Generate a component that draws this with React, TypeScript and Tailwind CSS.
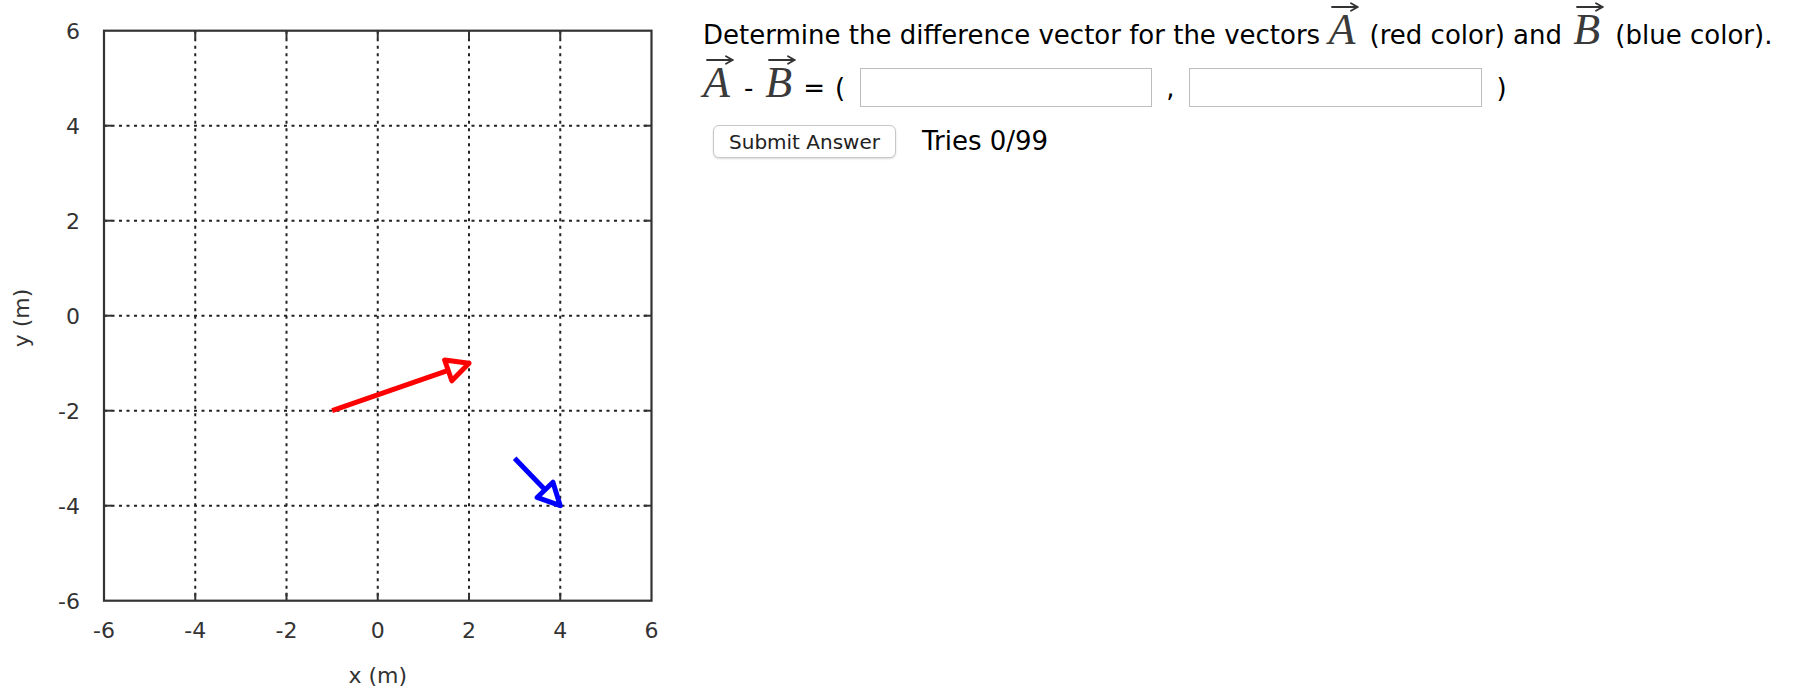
import React from "react"

// plot coordinates -> pixels
const X = (v: number) => 377.75 + v * 45.625
const Y = (v: number) => 315.7 - v * 47.5

const TICKS = [-6, -4, -2, 0, 2, 4, 6]

function VecArrow({ from, to, color }: { from: [number, number]; to: [number, number]; color: string }) {
  const x1 = X(from[0]), y1 = Y(from[1])
  const x2 = X(to[0]), y2 = Y(to[1])
  const dx = x2 - x1, dy = y2 - y1
  const len = Math.hypot(dx, dy)
  const ux = dx / len, uy = dy / len
  const L = 22, W = 11
  const bx = x2 - ux * L, by = y2 - uy * L
  const p1 = `${bx - uy * W},${by + ux * W}`
  const p2 = `${bx + uy * W},${by - ux * W}`
  return (
    <g>
      <line x1={x1} y1={y1} x2={bx} y2={by} stroke={color} strokeWidth={5} />
      <polygon points={`${x2},${y2} ${p1} ${p2}`} fill="#fff" stroke={color} strokeWidth={5} strokeLinejoin="round" />
    </g>
  )
}

function Plot() {
  const left = X(-6), right = X(6), top = Y(6), bottom = Y(-6)
  return (
    <svg width="701" height="698" viewBox="0 0 701 698" className="shrink-0" fontFamily="'DejaVu Sans', sans-serif">
      {/* grid */}
      {TICKS.slice(1, -1).map(t => (
        <g key={t}>
          <line x1={X(t)} y1={top} x2={X(t)} y2={bottom} stroke="#222" strokeWidth={2} strokeDasharray="3 4.5" />
          <line x1={left} y1={Y(t)} x2={right} y2={Y(t)} stroke="#222" strokeWidth={2} strokeDasharray="3 4.5" />
          {/* small ticks on the border */}
          <line x1={X(t)} y1={bottom} x2={X(t)} y2={bottom - 8} stroke="#333" strokeWidth={2} />
          <line x1={X(t)} y1={top} x2={X(t)} y2={top + 8} stroke="#333" strokeWidth={2} />
          <line x1={left} y1={Y(t)} x2={left + 8} y2={Y(t)} stroke="#333" strokeWidth={2} />
          <line x1={right} y1={Y(t)} x2={right - 8} y2={Y(t)} stroke="#333" strokeWidth={2} />
        </g>
      ))}
      <rect x={left} y={top} width={right - left} height={bottom - top} fill="none" stroke="#333" strokeWidth={2.2} />

      {/* tick labels */}
      {TICKS.map(t => (
        <text key={"y" + t} x={80} y={Y(t) + 8} textAnchor="end" fontSize={22} fill="#333">{t}</text>
      ))}
      {TICKS.map(t => (
        <text key={"x" + t} x={X(t)} y={638} textAnchor="middle" fontSize={22} fill="#333">{t}</text>
      ))}
      <text x={X(0)} y={683} textAnchor="middle" fontSize={22} fill="#333">x (m)</text>
      <text x={29} y={318} textAnchor="middle" fontSize={22} fill="#333" transform="rotate(-90 29 318)">y (m)</text>

      {/* vectors */}
      <VecArrow from={[-1, -2]} to={[2, -1]} color="#ff0000" />
      <VecArrow from={[3, -3]} to={[4, -4]} color="#0000ff" />
    </svg>
  )
}

function Vec({ ch }: { ch: string }) {
  return (
    <span className="relative inline-block font-['Liberation_Serif',serif] italic text-[44px] leading-none text-[#3a3a3a]">
      {ch}
      <svg className="absolute left-[3px] top-[-6px]" width="28" height="10" viewBox="0 0 28 10">
        <path d="M1 5 H26 M20 1.2 L26.5 5 L20 8.8" fill="none" stroke="#333" strokeWidth={1.8} strokeLinecap="round" />
      </svg>
    </span>
  )
}

export default function App() {
  return (
    <div className="flex w-[1804px] h-[698px] bg-white">
      <Plot />

      <div className="pl-[2px] text-[26px] text-black font-['DejaVu_Sans',sans-serif]">
        <div className="mt-[8px] flex items-baseline whitespace-pre leading-[30px]">
          <span>Determine the difference vector for the vectors </span>
          <Vec ch="A" />
          <span className="ml-[6px]"> (red color) and </span>
          <span className="ml-[3px] pr-[5px]"><Vec ch="B" /></span>
          <span className="ml-[2px]"> (blue color).</span>
        </div>

        <div className="mt-[9px] flex items-baseline whitespace-pre leading-[30px]">
          <Vec ch="A" />
          <span className="ml-[14px]">-</span>
          <span className="ml-[12px] pr-[5px]"><Vec ch="B" /></span>
          <span className="ml-[6px]">=</span>
          <span className="ml-[10px]">(</span>
          <input className="self-start mt-[7px] ml-[15px] w-[292px] h-[39px] border border-[#bdbdbd] bg-white outline-none" />
          <span className="ml-[14px]">,</span>
          <input className="self-start mt-[7px] ml-[15px] w-[293px] h-[39px] border border-[#bdbdbd] bg-white outline-none" />
          <span className="ml-[14px]">)</span>
        </div>

        <div className="mt-[15px] flex items-center">
          <button className="ml-[10px] w-[183px] h-[33px] rounded-[6px] border border-[#c8c8c8] bg-white shadow-[0_1px_2px_rgba(0,0,0,0.15)] text-[20px] text-[#222]">
            Submit Answer
          </button>
          <span className="ml-[26px]">Tries 0/99</span>
        </div>
      </div>
    </div>
  )
}
